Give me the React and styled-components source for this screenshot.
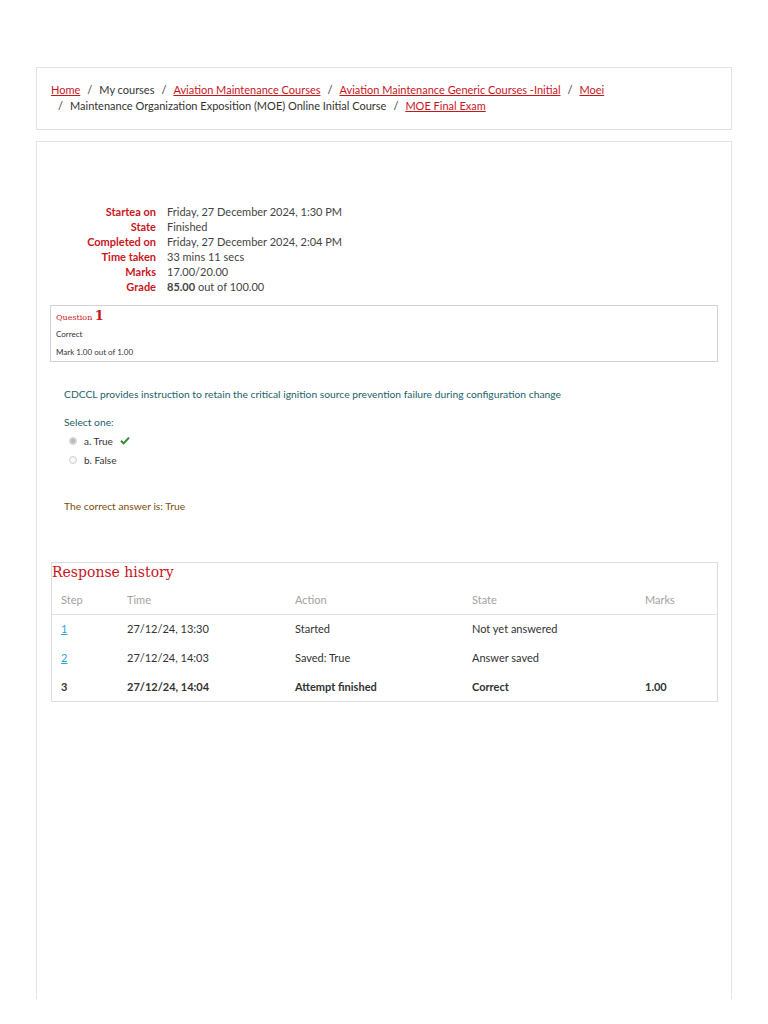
import React from 'react'
import styled, { createGlobalStyle } from 'styled-components'

const GlobalStyle = createGlobalStyle`
  *, *::before, *::after {
    box-sizing: border-box;
  }
  body {
    margin: 0;
    background: #fff;
    font-family: Lato, "Liberation Sans", sans-serif;
    color: #333;
  }
`

const Page = styled.div`
  padding: 67px 36px 0 36px;
  display: flex;
  flex-direction: column;
  gap: 11px;
`

const Card = styled.div`
  border: 1px solid #e3e3e3;
  background: #fff;
`

const Crumbs = styled(Card)`
  padding: 14px 14px 15px 14px;
  font-size: 11px;
  line-height: 16px;
  color: #333;
`

const Crumb = styled.a`
  color: #c8161d;
  text-decoration: underline;
`

const Sep = styled.span`
  padding: 0 7px;
`

const Main = styled(Card)`
  border-bottom: none;
  height: 858px;
  padding: 62px 13px 0 13px;
`

const Summary = styled.table`
  border-collapse: collapse;
  font-size: 11px;
  margin-bottom: 11px;
  td {
    padding: 0;
    height: 15px;
    line-height: 15px;
    vertical-align: middle;
  }
`

const Label = styled.td`
  width: 117px;
  text-align: right;
  font-weight: bold;
  color: #c8161d;
  padding-right: 11px !important;
`

const Value = styled.td`
  color: #444;
`

const QuestionInfo = styled.div`
  border: 1px solid #cfd4da;
  padding: 3px 5px 0 5px;
  font-size: 8px;
  color: #333;
  line-height: 18px;
`

const QTitle = styled.div`
  font-family: "DejaVu Serif", serif;
  color: #c8161d;
  font-size: 8px;
  line-height: 14px;
  span {
    font-size: 13px;
    font-weight: bold;
  }
`

const QuestionBody = styled.div`
  padding: 25px 14px 0 14px;
  font-size: 10.3px;
  line-height: 14px;
`

const Prompt = styled.div`
  color: #1d5f6b;
  margin-bottom: 14px;
`

const SelectOne = styled.div`
  color: #1d5f6b;
  margin-bottom: 2px;
`

const Option = styled.label`
  display: flex;
  align-items: center;
  gap: 7px;
  height: 19px;
  padding-left: 5px;
  font-size: 10px;
  color: #333;
`

const Radio = styled.span`
  width: 8px;
  height: 8px;
  border-radius: 50%;
  border: 1px solid #cfcfcf;
  background: ${p => (p.checked ? 'radial-gradient(circle, #bbb 0 2px, #e8e8e8 3px)' : '#f8f8f8')};
`

const Answer = styled.div`
  color: #7d4e0a;
  margin-top: 30px;
`

const History = styled.div`
  margin: 49px 0 0 1px;
  border: 1px solid #dedede;
`

const HistoryTitle = styled.h3`
  margin: 0;
  padding: 1px 0 6px 0;
  font-family: "DejaVu Serif", serif;
  font-weight: normal;
  font-size: 14px;
  line-height: 16px;
  color: #c8161d;
`

const Table = styled.table`
  width: 100%;
  table-layout: fixed;
  border-collapse: collapse;
  font-size: 11px;
  th {
    text-align: left;
    font-weight: normal;
    color: #a2a2a2;
    height: 28px;
    border-bottom: 1px solid #e3e3e3;
  }
  td {
    height: 29px;
    color: #333;
  }
  th, td {
    padding: 0 0 0 9px;
  }
`

const Col = styled.col`
  width: ${p => (p.w ? `${p.w}px` : 'auto')};
`

const Row = styled.tr`
  td {
    font-weight: ${p => (p.bold ? 'bold' : 'normal')};
  }
`

const StepLink = styled.a`
  color: #2aa6dc;
  text-decoration: underline;
`

const Check = () => (
  <svg width="10" height="9" viewBox="0 0 10 9">
    <path d="M1 4.8 L3.6 7.4 L9 1.6" stroke="#2e8b2e" strokeWidth="2" fill="none" />
  </svg>
)

const summary = [
  ['Startea on', 'Friday, 27 December 2024, 1:30 PM'],
  ['State', 'Finished'],
  ['Completed on', 'Friday, 27 December 2024, 2:04 PM'],
  ['Time taken', '33 mins 11 secs'],
  ['Marks', '17.00/20.00'],
]

const steps = [
  { step: '1', time: '27/12/24, 13:30', action: 'Started', state: 'Not yet answered', marks: '' },
  { step: '2', time: '27/12/24, 14:03', action: 'Saved: True', state: 'Answer saved', marks: '' },
  { step: '3', time: '27/12/24, 14:04', action: 'Attempt finished', state: 'Correct', marks: '1.00', final: true },
]

export default function App() {
  return (
    <>
      <GlobalStyle />
      <Page>
        <Crumbs>
          <Crumb>Home</Crumb><Sep>/</Sep>My courses<Sep>/</Sep>
          <Crumb>Aviation Maintenance Courses</Crumb><Sep>/</Sep>
          <Crumb>Aviation Maintenance Generic Courses -Initial</Crumb><Sep>/</Sep>
          <Crumb>Moei</Crumb>
          <br />
          <Sep>/</Sep>Maintenance Organization Exposition (MOE) Online Initial Course<Sep>/</Sep>
          <Crumb>MOE Final Exam</Crumb>
        </Crumbs>

        <Main>
          <Summary>
            <tbody>
              {summary.map(([k, v]) => (
                <tr key={k}>
                  <Label>{k}</Label>
                  <Value>{v}</Value>
                </tr>
              ))}
              <tr>
                <Label>Grade</Label>
                <Value><b>85.00</b> out of 100.00</Value>
              </tr>
            </tbody>
          </Summary>

          <QuestionInfo>
            <QTitle>Question <span>1</span></QTitle>
            <div>Correct</div>
            <div>Mark 1.00 out of 1.00</div>
          </QuestionInfo>

          <QuestionBody>
            <Prompt>CDCCL provides instruction to retain the critical ignition source prevention failure during configuration change</Prompt>
            <SelectOne>Select one:</SelectOne>
            <Option><Radio checked />a. True <Check /></Option>
            <Option><Radio />b. False</Option>
            <Answer>The correct answer is: True</Answer>
          </QuestionBody>

          <History>
            <HistoryTitle>Response history</HistoryTitle>
            <Table>
              <colgroup>
                <Col w={66} />
                <Col w={168} />
                <Col w={177} />
                <Col w={173} />
                <Col />
              </colgroup>
              <thead>
                <tr>
                  <th>Step</th>
                  <th>Time</th>
                  <th>Action</th>
                  <th>State</th>
                  <th>Marks</th>
                </tr>
              </thead>
              <tbody>
                {steps.map(s => (
                  <Row key={s.step} bold={s.final}>
                    <td>{s.final ? s.step : <StepLink>{s.step}</StepLink>}</td>
                    <td>{s.time}</td>
                    <td>{s.action}</td>
                    <td>{s.state}</td>
                    <td>{s.marks}</td>
                  </Row>
                ))}
              </tbody>
            </Table>
          </History>
        </Main>
      </Page>
    </>
  )
}
